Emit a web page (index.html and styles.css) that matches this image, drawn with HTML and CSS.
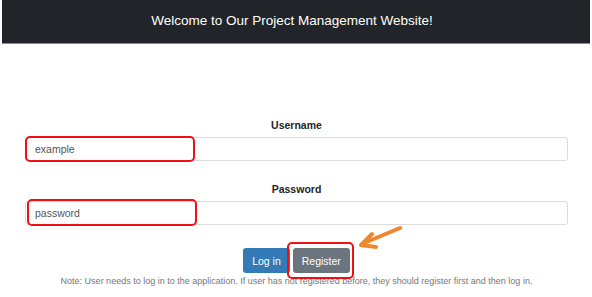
FILE: index.html
```html
<!DOCTYPE html>
<html lang="en">
<head>
    <meta charset="UTF-8">
    <meta name="viewport" content="width=device-width, initial-scale=1.0">
    <title>Project Management - Log in</title>
    <link rel="stylesheet" href="styles.css">
</head>
<body>
    <div id="header">
        <h1 class="title">Welcome to Our Project Management Website!</h1>
    </div>

    <div id="main-container">
        <form class="login-form">
            <div class="field field-user">
                <label for="username">Username</label>
                <input type="text" id="username" value="example">
            </div>
            <div class="field field-pass">
                <label for="password">Password</label>
                <input type="text" id="password" value="password">
            </div>
            <div class="buttons">
                <button type="button" class="btn btn-primary">Log in</button>
                <button type="button" class="btn btn-secondary">Register</button>
            </div>
            <p class="note">Note: User needs to log in to the application. If user has not registered before, they should register first and then log in.</p>

            <!-- annotation marks drawn over the form -->
            <div class="mark mark-user"></div>
            <div class="mark mark-pass"></div>
            <div class="mark mark-register"></div>
            <svg class="arrow" width="50" height="30" viewBox="0 0 50 30">
                <path d="M48 4 L12 19" stroke="#f0872f" stroke-width="4" stroke-linecap="round" fill="none"/>
                <path d="M20 10 L9 21 L24 23" stroke="#f0872f" stroke-width="4" stroke-linecap="round" stroke-linejoin="round" fill="none"/>
            </svg>
        </form>
    </div>
</body>
</html>
```

FILE: styles.css
```css
/* General Styles */
body, h1, p, form, div {
    margin: 0;
    padding: 0;
}

body {
    font-family: "Liberation Sans", Arial, sans-serif;
    font-size: 10.5px;
    color: #212529;
    background: #ffffff;
}

/* Header Styles */
#header {
    margin: 0 2px;
    height: 43px;
    background-color: #212529;
    border-bottom: 1px solid #8a8a8a;
    display: flex;
    align-items: center;
    justify-content: center;
}

.title {
    font-size: 13.5px;
    font-weight: normal;
    color: #ffffff;
    margin-top: -3px;
    margin-left: -8px;
}

/* Main Container Styles */
#main-container {
    padding: 0 24px 0 25px;
}

.login-form {
    position: relative;
    padding-top: 75px;
}

.field {
    display: flex;
    flex-direction: column;
    align-items: center;
}

.field label {
    font-weight: bold;
    font-size: 10.5px;
    margin-bottom: 6px;
}

.field input {
    box-sizing: border-box;
    width: 100%;
    height: 24px;
    padding: 0 9px;
    border: 1px solid #dcdcdc;
    border-radius: 3px;
    font-family: "Liberation Sans", Arial, sans-serif;
    font-size: 10.5px;
    color: #555555;
    outline: none;
}

.field-pass {
    margin-top: 22px;
}

/* Buttons */
.buttons {
    display: flex;
    justify-content: center;
    gap: 3px;
    margin-top: 23px;
}

.btn {
    height: 25px;
    padding: 0 9px;
    border: none;
    border-radius: 3px;
    color: #ffffff;
    font-family: "Liberation Sans", Arial, sans-serif;
    font-size: 10.5px;
}

.btn-primary {
    background-color: #337ab7;
}

.btn-secondary {
    background-color: #6c757d;
}

.note {
    text-align: center;
    font-size: 9px;
    color: #777777;
    margin-top: 3px;
}

/* Annotation marks */
.mark {
    position: absolute;
    border: 2px solid #ee1111;
    border-radius: 5px;
    box-sizing: border-box;
}

.mark-user {
    left: 0;
    top: 92px;
    width: 170px;
    height: 26px;
}

.mark-pass {
    left: 2px;
    top: 155px;
    width: 170px;
    height: 27px;
}

.mark-register {
    left: 262px;
    top: 198px;
    width: 67px;
    height: 37px;
}

.arrow {
    position: absolute;
    left: 327px;
    top: 180px;
}
```
